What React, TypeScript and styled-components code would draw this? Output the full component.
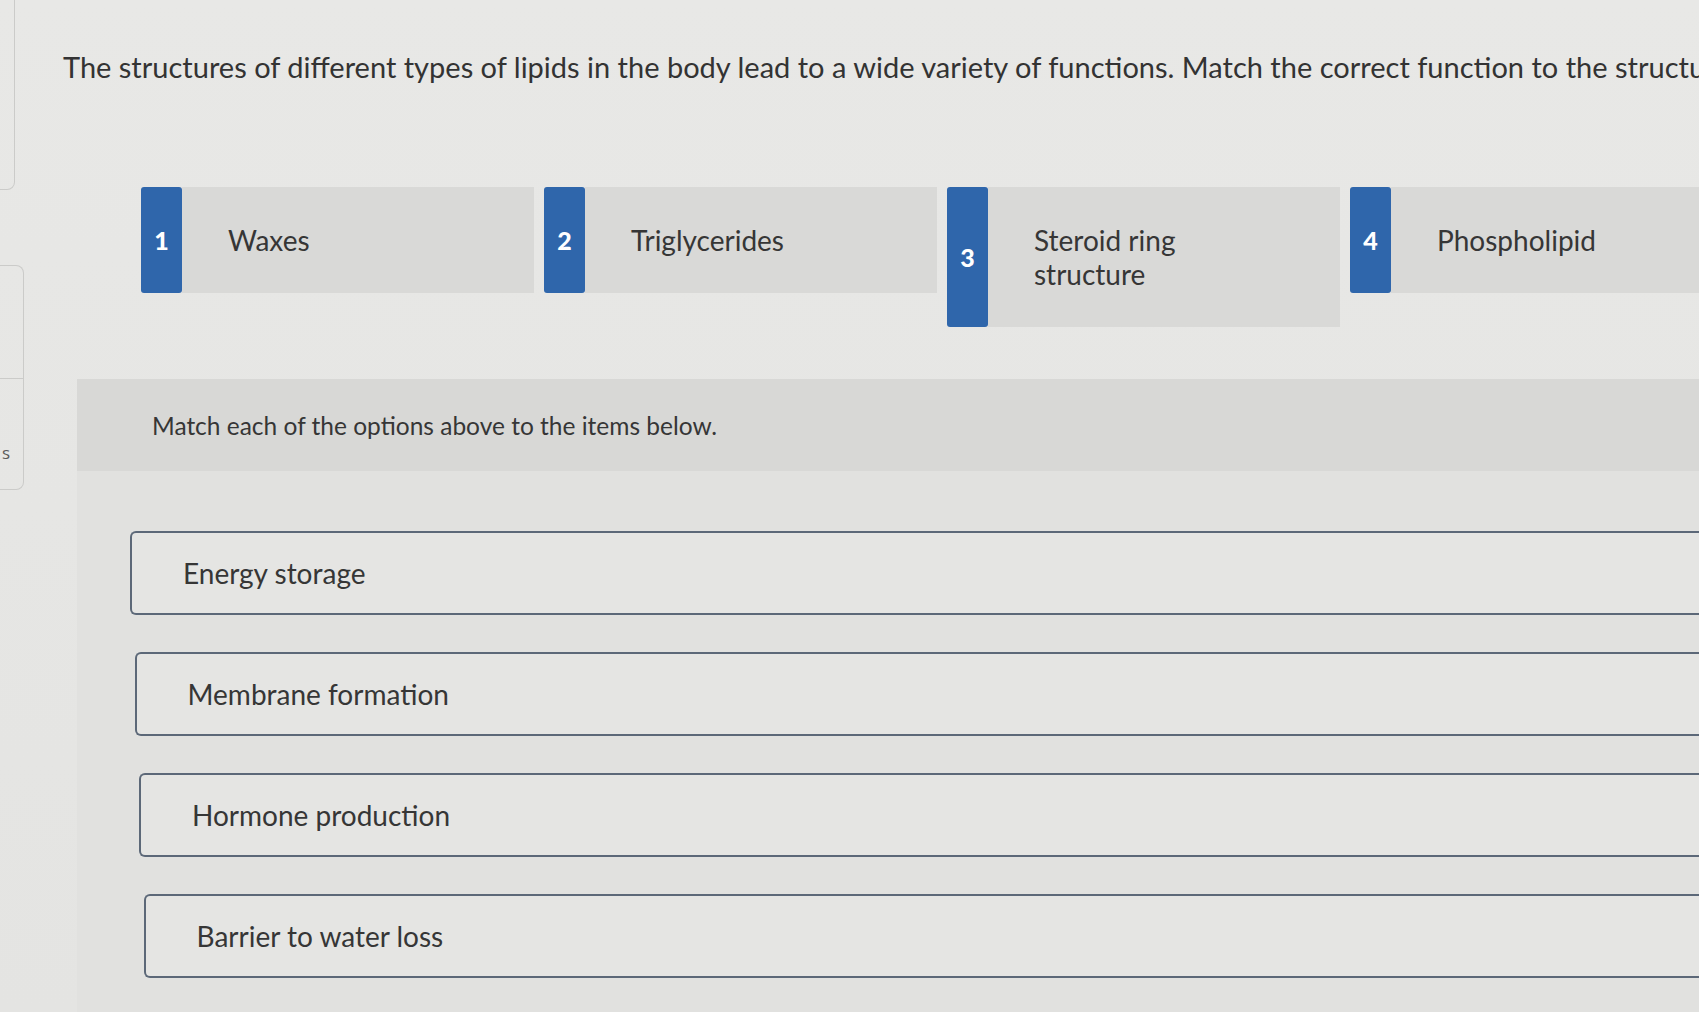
import styled, { createGlobalStyle } from "styled-components";

const GlobalStyle = createGlobalStyle`
  html, body {
    margin: 0;
    padding: 0;
    background: #e6e6e4;
  }
  body {
    font-family: Lato, "Open Sans", "Liberation Sans", sans-serif;
    color: #353535;
  }
`;

interface Option {
  id: number;
  label: string;
}

const options: Option[] = [
  { id: 1, label: "Waxes" },
  { id: 2, label: "Triglycerides" },
  { id: 3, label: "Steroid ring structure" },
  { id: 4, label: "Phospholipid" }
];

const targets = [
  "Energy storage",
  "Membrane formation",
  "Hormone production",
  "Barrier to water loss"
];

const App = () => {
  return (
    <>
      <GlobalStyle />
      <Page>
        <Sidebar>
          <SideCard top={-20} height={210} width={15} />
          <SideCard top={75} height={225} width={24}>
            <SideDivider />
            <SideLetter>s</SideLetter>
          </SideCard>
        </Sidebar>
        <Main>
          <Question>
            The structures of different types of lipids in the body lead to a
            wide variety of functions. Match the correct function to the
            structure.
          </Question>

          <OptionsRow>
            {options.map((option) => (
              <OptionItem key={option.id}>
                <NumberTab>{option.id}</NumberTab>
                <OptionCard>
                  <OptionLabel>{option.label}</OptionLabel>
                </OptionCard>
              </OptionItem>
            ))}
          </OptionsRow>

          <MatchPanel>
            <PanelHeader>Match each of the options above to the items below.</PanelHeader>
            <TargetList>
              {targets.map((target, index) => (
                <DropTarget key={target} shift={index * 4.5}>
                  {target}
                </DropTarget>
              ))}
            </TargetList>
          </MatchPanel>
        </Main>
      </Page>
    </>
  );
};

const Page = styled.div`
  display: flex;
  width: 100vw;
  height: 1012px;
  overflow: hidden;
  background: linear-gradient(180deg, #e8e8e6 0%, #e4e4e2 100%);
`;

const Sidebar = styled.div`
  flex: 0 0 26px;
  display: flex;
  flex-direction: column;
`;

const SideCard = styled.div<{ top: number; height: number; width: number }>`
  margin-top: ${({ top }) => top}px;
  height: ${({ height }) => height}px;
  width: ${({ width }) => width}px;
  border: 1px solid #cbcbc9;
  border-left: none;
  border-radius: 0 8px 8px 0;
  box-sizing: border-box;
`;

const SideDivider = styled.div`
  margin-top: 112px;
  height: 1px;
  background: #cbcbc9;
`;

const SideLetter = styled.span`
  display: block;
  margin-top: 62px;
  padding-left: 2px;
  font-family: "Open Sans", "Liberation Sans", sans-serif;
  font-size: 17px;
  color: #5a5a5a;
`;

const Main = styled.div`
  flex: 1;
  min-width: 0;
  padding-left: 37px;
`;

const Question = styled.div`
  margin-top: 50px;
  font-size: 29px;
  line-height: 34px;
  white-space: nowrap;
  color: #333;
`;

const OptionsRow = styled.div`
  display: flex;
  align-items: flex-start;
  gap: 10px;
  margin-top: 103px;
  margin-left: 78px;
  width: 1700px;
`;

const OptionItem = styled.div`
  flex: 0 0 393px;
  display: flex;
`;

const NumberTab = styled.div`
  flex: 0 0 41px;
  display: flex;
  align-items: center;
  justify-content: center;
  background: #2f66ab;
  border-radius: 3px;
  color: #fff;
  font-size: 25px;
  font-weight: 900;
`;

const OptionCard = styled.div`
  flex: 1;
  display: flex;
  align-items: center;
  padding: 36px 20px 36px 46px;
  background: #d9d9d7;
`;

const OptionLabel = styled.span`
  max-width: 200px;
  font-size: 28px;
  line-height: 34px;
  color: #363636;
`;

const MatchPanel = styled.div`
  margin-top: 52px;
  margin-left: 14px;
  width: 1700px;
  background: #e1e1df;
  min-height: 700px;
`;

const PanelHeader = styled.div`
  display: flex;
  align-items: center;
  height: 92px;
  padding-left: 75px;
  background: #d8d8d6;
  font-size: 24.5px;
  color: #363636;
`;

const TargetList = styled.div`
  display: flex;
  flex-direction: column;
  gap: 37px;
  padding: 60px 0 0 53px;
`;

const DropTarget = styled.div<{ shift: number }>`
  display: flex;
  align-items: center;
  height: 84px;
  margin-left: ${({ shift }) => shift}px;
  padding-left: 51px;
  box-sizing: border-box;
  border: 2px solid #5c6878;
  border-right: none;
  border-radius: 6px 0 0 6px;
  background: #e5e5e3;
  font-size: 28px;
  color: #363636;
`;

export default App;
